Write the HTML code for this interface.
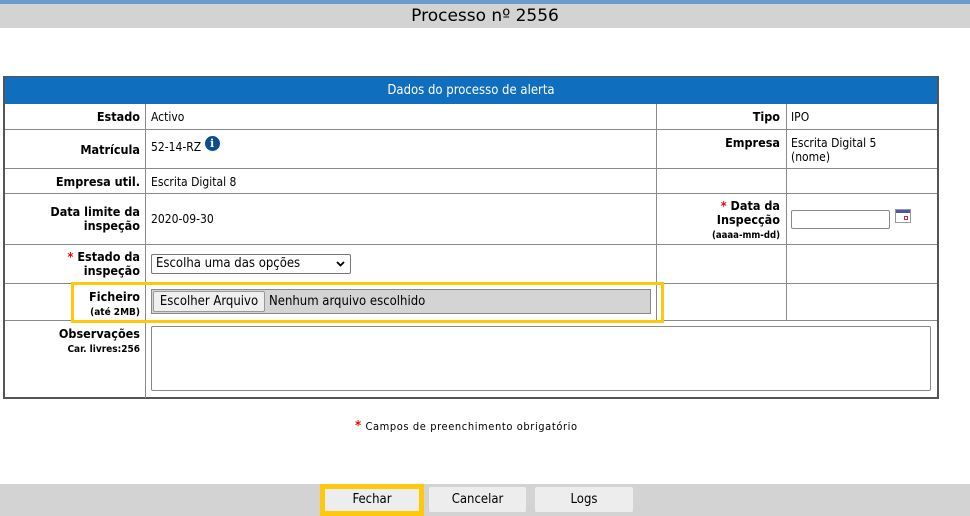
<!DOCTYPE html>
<html><head><meta charset="utf-8"><style>
*{margin:0;padding:0;box-sizing:border-box}
body{width:970px;height:516px;position:relative;background:#fff;font-family:"DejaVu Sans Condensed","DejaVu Sans",sans-serif;font-size:12px;color:#000;overflow:hidden}
.a{position:absolute}
.l{position:absolute;font-weight:bold;text-align:right;line-height:14px;font-size:12.5px}
.v{position:absolute;line-height:14px}
.h{position:absolute;height:1px;background:#8a8a8a}
.vl{position:absolute;width:1px;background:#8a8a8a}
.st{color:#e00;font-weight:bold}
.btn{position:absolute;top:487px;height:25px;background:#ededed;border-radius:2px;text-align:center;line-height:25px;font-size:13px}
</style></head><body>
<div class="a" style="left:0;top:0;width:970px;height:4px;background:#6a9bcc"></div>
<div class="a" style="left:0;top:4px;width:970px;height:24px;background:#d3d3d3;text-align:center;font-size:17px;line-height:24px;font-family:'DejaVu Sans',sans-serif;padding-left:-2px">Processo nº 2556</div>

<div class="a" style="left:3px;top:76px;width:936px;height:323px;border:2px solid #555;border-top:1px solid #555"></div>
<div class="a" style="left:5px;top:77px;width:932px;height:27px;background:#106ebe;color:#fff;text-align:center;line-height:28px;font-size:13px">Dados do processo de alerta</div>

<div class="h" style="left:5px;top:129px;width:932px"></div>
<div class="h" style="left:5px;top:168px;width:932px"></div>
<div class="h" style="left:5px;top:193px;width:932px"></div>
<div class="h" style="left:5px;top:244px;width:932px"></div>
<div class="h" style="left:5px;top:283px;width:932px"></div>
<div class="h" style="left:5px;top:320px;width:932px"></div>
<div class="vl" style="left:145px;top:104px;height:294px"></div>
<div class="vl" style="left:656px;top:104px;height:216px"></div>
<div class="vl" style="left:786px;top:104px;height:216px"></div>

<div class="l" style="right:830px;top:110px">Estado</div>
<div class="v" style="left:151px;top:110px">Activo</div>
<div class="l" style="right:190px;top:110px">Tipo</div>
<div class="v" style="left:791px;top:110px">IPO</div>

<div class="l" style="right:830px;top:143px">Matrícula</div>
<div class="v" style="left:151px;top:140px">52-14-RZ <span style="display:inline-block;width:15px;height:15px;border-radius:50%;background:#0d4d8c;color:#fff;font-weight:bold;font-size:11px;line-height:15px;text-align:center;vertical-align:top;margin-top:-4px;font-family:'DejaVu Serif',serif">i</span></div>
<div class="l" style="right:190px;top:136px">Empresa</div>
<div class="v" style="left:791px;top:136px">Escrita Digital 5<br>(nome)</div>

<div class="l" style="right:830px;top:175px">Empresa util.</div>
<div class="v" style="left:151px;top:175px">Escrita Digital 8</div>

<div class="l" style="right:830px;top:205px">Data limite da<br>inspeção</div>
<div class="v" style="left:151px;top:212px">2020-09-30</div>
<div class="l" style="right:190px;top:199px"><span class="st">*</span> Data da<br>Inspecção<br><span style="font-size:9.5px">(aaaa-mm-dd)</span></div>
<div class="a" style="left:791px;top:210px;width:99px;height:19px;border:1px solid #888;border-radius:2px;background:#fff"></div>
<div class="a" style="left:895px;top:209px;width:16px;height:14px;border:1px solid #999;background:#fff"><div style="height:3px;background:#4a5a9c"></div><div style="position:absolute;right:2px;top:6px;width:4px;height:4px;border:1px solid #b33"></div></div>

<div class="l" style="right:830px;top:250px"><span class="st">*</span> Estado da<br>inspeção</div>
<div class="a" style="left:151px;top:254px;width:200px;height:20px;border:1px solid #777;border-radius:2px;background:#fff;padding-left:4px;line-height:18px;font-size:13px">Escolha uma das opções<svg style="position:absolute;right:5px;top:6px" width="9" height="6" viewBox="0 0 9 6"><path d="M1 1L4.5 4.5L8 1" stroke="#000" stroke-width="1.8" fill="none"/></svg></div>

<div class="a" style="left:71px;top:282px;width:593px;height:41px;border:3px solid #ffc80a"></div>
<div class="l" style="right:830px;top:290px">Ficheiro<br><span style="font-size:10px">(até 2MB)</span></div>
<div class="a" style="left:151px;top:289px;width:500px;height:25px;background:#d4d4d4;border:1px solid #888"></div>
<div class="a" style="left:153px;top:291px;width:112px;height:21px;background:#efefef;border:1px solid #999;border-radius:2px;text-align:center;line-height:19px;font-size:13px">Escolher Arquivo</div>
<div class="a" style="left:269px;top:292px;font-size:13px;line-height:19px">Nenhum arquivo escolhido</div>

<div class="l" style="right:830px;top:327px">Observações<br><span style="font-size:10px">Car. livres:256</span></div>
<div class="a" style="left:151px;top:326px;width:780px;height:65px;border:1px solid #888;border-radius:2px"></div>

<div class="a" style="left:355px;top:419px;font-size:11px;letter-spacing:0.6px"><span class="st" style="font-size:13px">*</span> Campos de preenchimento obrigatório</div>

<div class="a" style="left:0;top:484px;width:970px;height:32px;background:#d3d3d3"></div>
<div class="a" style="left:320px;top:484px;width:104px;height:32px;background:#ffc80a"></div>
<div class="btn" style="left:325px;width:94px;border-radius:0;top:489px;height:22px;line-height:22px">Fechar</div>
<div class="btn" style="left:429px;width:97px">Cancelar</div>
<div class="btn" style="left:535px;width:98px">Logs</div>
</body></html>
